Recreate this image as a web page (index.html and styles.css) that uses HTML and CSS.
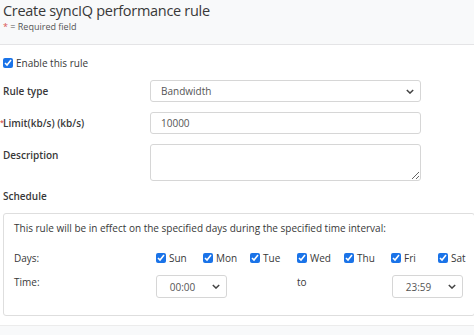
FILE: index.html
```html
<!DOCTYPE html>
<html lang="en">

<head>
    <meta charset="UTF-8">
    <meta name="viewport" content="width=device-width, initial-scale=1.0">
    <title>Create syncIQ performance rule</title>
    <link rel="stylesheet" href="styles.css">
</head>

<body>
    <div class="header">
        <h1>Create syncIQ performance rule</h1>
        <p class="required-note"><span class="req">*</span> = Required field</p>
    </div>

    <div class="form">
        <label class="enable-row">
            <input type="checkbox" checked>
            <span>Enable this rule</span>
        </label>

        <div class="form-row">
            <label class="form-label">Rule type</label>
            <div class="select-wrap">
                <select class="form-control">
                    <option>Bandwidth</option>
                </select>
                <svg class="chevron" viewBox="0 0 10 6"><path d="M1 1l4 4 4-4" /></svg>
            </div>
        </div>

        <div class="form-row">
            <label class="form-label"><span class="req req-label">*</span>Limit(kb/s) (kb/s)</label>
            <input class="form-control" type="text" value="10000">
        </div>

        <div class="form-row">
            <label class="form-label">Description</label>
            <textarea class="form-control textarea"></textarea>
        </div>

        <div class="section-title">Schedule</div>

        <div class="schedule-box">
            <p class="schedule-note">This rule will be in effect on the specified days during the specified time interval:</p>

            <div class="days-row">
                <span class="row-label">Days:</span>
                <div class="days">
                    <label class="day"><input type="checkbox" checked> Sun</label>
                    <label class="day"><input type="checkbox" checked> Mon</label>
                    <label class="day"><input type="checkbox" checked> Tue</label>
                    <label class="day"><input type="checkbox" checked> Wed</label>
                    <label class="day"><input type="checkbox" checked> Thu</label>
                    <label class="day"><input type="checkbox" checked> Fri</label>
                    <label class="day"><input type="checkbox" checked> Sat</label>
                </div>
            </div>

            <div class="time-row">
                <span class="row-label">Time:</span>
                <div class="time-fields">
                    <div class="select-wrap time-select">
                        <select class="form-control">
                            <option>00:00</option>
                        </select>
                        <svg class="chevron" viewBox="0 0 10 6"><path d="M1 1l4 4 4-4" /></svg>
                    </div>
                    <span class="to-text">to</span>
                    <div class="select-wrap time-select">
                        <select class="form-control">
                            <option>23:59</option>
                        </select>
                        <svg class="chevron" viewBox="0 0 10 6"><path d="M1 1l4 4 4-4" /></svg>
                    </div>
                </div>
            </div>
        </div>
    </div>

    <div class="footer"></div>
</body>

</html>
```

FILE: styles.css
```css
:root {
    --text-primary: #383838;
    --text-secondary: #555555;
    --header-bg: #f8f9fa;
    --border-color: #dedede;
    --input-border: #d6d6d6;
    --check-color: #1a73e8;
    --required: #d9534f;
}

body {
    font-family: 'Open Sans', 'Noto Sans', sans-serif;
    font-size: 10px;
    margin: 0;
    padding: 0;
    color: var(--text-primary);
    background-color: #ffffff;
}

.header {
    background-color: var(--header-bg);
    border-bottom: 1px solid #e4e4e6;
    height: 44px;
    padding: 0 3px;
}

.header h1 {
    margin: 0;
    padding-top: 1px;
    font-size: 14.5px;
    font-weight: 400;
    letter-spacing: -0.3px;
    line-height: 20px;
}

.required-note {
    margin: 0;
    font-size: 9px;
    line-height: 12px;
    color: var(--text-secondary);
}

.req {
    color: var(--required);
}

.req-label {
    position: absolute;
    margin-left: -3px;
    font-size: 7px;
}

.form {
    padding: 0 3px;
}

input[type="checkbox"] {
    width: 10px;
    height: 10px;
    margin: 0;
    accent-color: var(--check-color);
}

.enable-row {
    display: flex;
    align-items: center;
    gap: 3px;
    margin-top: 12px;
    height: 12px;
}

.form-row {
    display: grid;
    grid-template-columns: 147px 271px;
    align-items: start;
    margin-top: 10px;
}

.enable-row + .form-row {
    margin-top: 11px;
}

.form-label {
    font-weight: 600;
    line-height: 22px;
}

.form-control {
    box-sizing: border-box;
    width: 100%;
    height: 22px;
    padding: 0 10px;
    border: 1px solid var(--input-border);
    border-radius: 3px;
    background-color: #ffffff;
    font-family: inherit;
    font-size: 10px;
    color: var(--text-secondary);
    outline: none;
}

.textarea {
    height: 37px;
    resize: vertical;
}

.select-wrap {
    position: relative;
}

.select-wrap select {
    appearance: none;
    -webkit-appearance: none;
}

.chevron {
    position: absolute;
    right: 7px;
    top: 9px;
    width: 8px;
    height: 5px;
    fill: none;
    stroke: #444444;
    stroke-width: 1.8;
    pointer-events: none;
}

.section-title {
    font-weight: 600;
    margin-top: 8px;
    line-height: 14px;
}

.schedule-box {
    border: 1px solid var(--border-color);
    border-radius: 3px;
    margin-top: 10px;
    margin-right: -4px;
    padding: 7px 10px 17px;
}

.schedule-note {
    margin: 0;
    line-height: 14px;
}

.days-row,
.time-row {
    display: grid;
    grid-template-columns: 142px 1fr;
}

.days-row {
    margin-top: 16px;
    align-items: center;
}

.row-label {
    line-height: 14px;
}

.days {
    display: grid;
    grid-template-columns: repeat(7, 47px);
}

.day {
    display: flex;
    align-items: center;
    gap: 3px;
    line-height: 14px;
}

.time-row {
    margin-top: 10px;
}

.time-fields {
    display: grid;
    grid-template-columns: 71px 70px 95px 71px;
}

.to-text {
    grid-column: 3;
    line-height: 14px;
}

.time-select {
    grid-column: 4;
}

.time-fields .time-select:first-child {
    grid-column: 1;
}

.time-select .form-control {
    height: 23px;
    text-align: center;
    padding: 0 18px 0 0;
}

.footer {
    margin-top: 9px;
    height: 12px;
    background-color: var(--header-bg);
    border-top: 1px solid #ececec;
}
```
